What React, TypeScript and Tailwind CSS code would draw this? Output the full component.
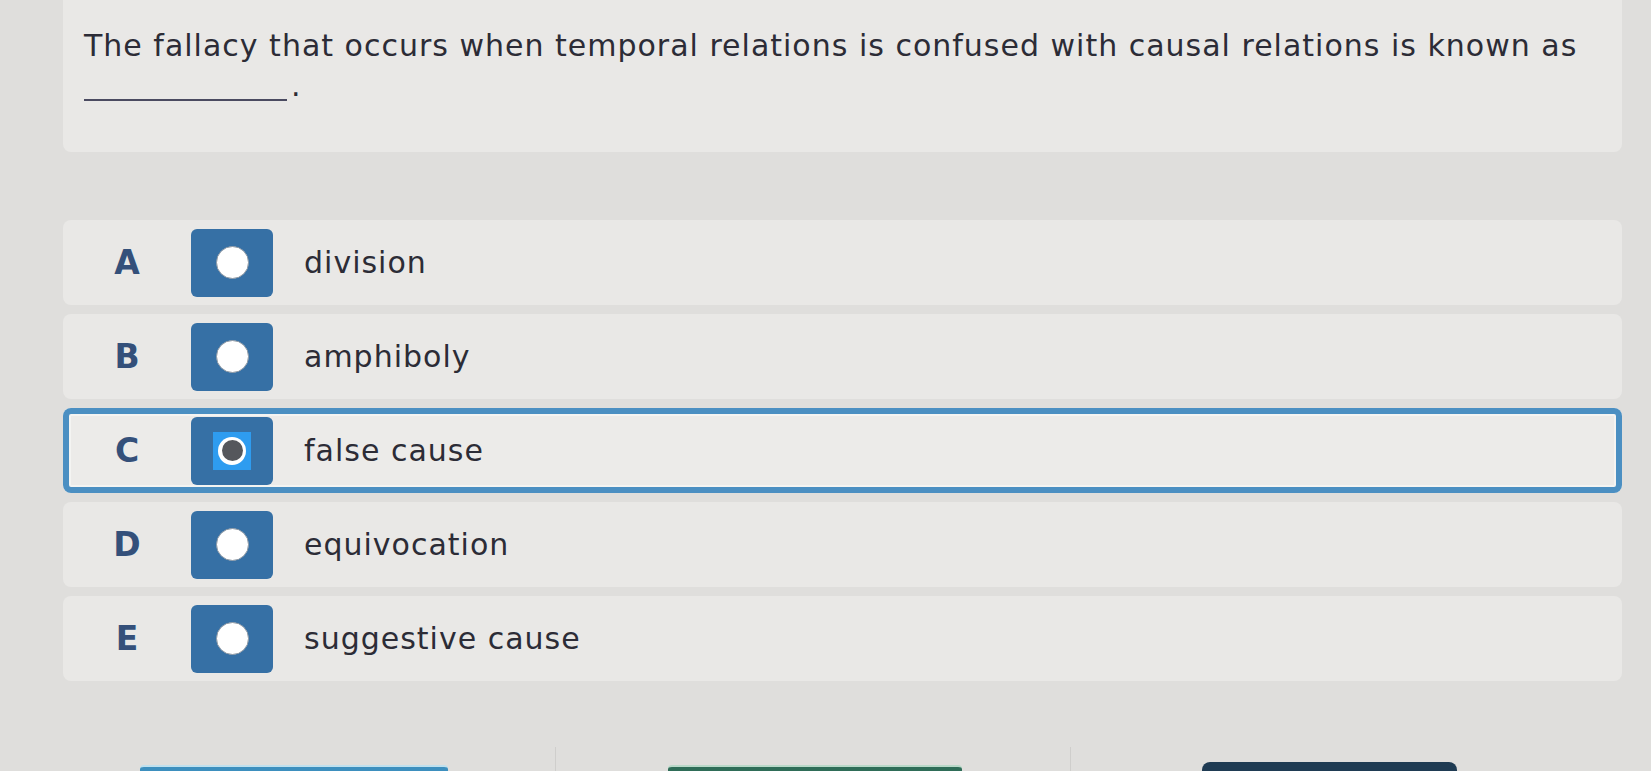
import React from 'react';

type Option = { letter: string; label: string; selected?: boolean };

const options: Option[] = [
  { letter: 'A', label: 'division' },
  { letter: 'B', label: 'amphiboly' },
  { letter: 'C', label: 'false cause', selected: true },
  { letter: 'D', label: 'equivocation' },
  { letter: 'E', label: 'suggestive cause' },
];

function Radio({ selected }: { selected?: boolean }) {
  return (
    <div className="w-[82px] h-[68px] rounded-[6px] bg-[#3670a5] flex items-center justify-center shrink-0">
      {selected ? (
        <div className="w-[38px] h-[38px] bg-[#2e9cf0] flex items-center justify-center">
          <div className="w-[28px] h-[28px] rounded-full bg-white flex items-center justify-center">
            <div className="w-[21px] h-[21px] rounded-full bg-[#55575c]" />
          </div>
        </div>
      ) : (
        <div className="w-[33px] h-[33px] rounded-full bg-white border border-[#8f99a4]" />
      )}
    </div>
  );
}

export default function App() {
  return (
    <div className="h-screen w-full overflow-hidden bg-[#dfdedc] font-['DejaVu_Sans',sans-serif] text-[#2c2c36]">
      <div className="pl-[63px] w-[1622px]">
        {/* Question */}
        <div className="h-[152px] bg-[#e9e8e6] rounded-b-[8px] pl-[21px] pr-4 pt-[21px]">
          <p className="text-[30px] leading-[50px] tracking-[1px] whitespace-nowrap">
            The fallacy that occurs when temporal relations is confused with causal relations is known as
          </p>
          <p className="text-[30px] leading-[30px] flex items-end">
            <span className="inline-block w-[203px] border-b-2 border-[#4a4a60] mr-[4px]" />
            <span>.</span>
          </p>
        </div>

        {/* Options */}
        <div className="mt-[68px] flex flex-col gap-[9px]">
          {options.map((o) => (
            <div
              key={o.letter}
              className={`h-[85px] rounded-[8px] flex items-center ${
                o.selected
                  ? 'bg-[#ecebe9] shadow-[inset_0_0_0_6px_#4b8fc2,inset_0_0_0_8px_#f4f4f2]'
                  : 'bg-[#e9e8e6]'
              }`}
            >
              <div className="w-[128px] text-center text-[33px] font-bold text-[#34507a]">
                {o.letter}
              </div>
              <Radio selected={o.selected} />
              <div className="ml-[31px] text-[30px] tracking-[1px] text-[#2c2c36]">{o.label}</div>
            </div>
          ))}
        </div>

        {/* Footer buttons, cut off by the window */}
        <div className="mt-[66px] h-[40px] flex">
          <div className="w-[77px]" />
          <div className="mt-[18px] w-[308px] h-[30px] rounded-t-[4px] bg-[#3d8fbe] border-t-2 border-[#bfe0ee]" />
          <div className="ml-[107px] w-px h-[40px] bg-[#cfcecc]" />
          <div className="ml-[112px] mt-[18px] w-[294px] h-[30px] rounded-t-[4px] bg-[#2f6d58] border-t-2 border-[#b9d9c9]" />
          <div className="ml-[108px] w-px h-[40px] bg-[#cfcecc]" />
          <div className="ml-[131px] mt-[15px] w-[255px] h-[30px] rounded-t-[8px] bg-[#1f3b53]" />
        </div>
      </div>
    </div>
  );
}
